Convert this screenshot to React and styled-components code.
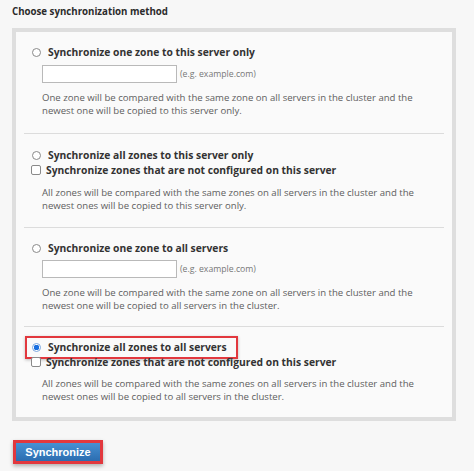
import { createGlobalStyle } from "styled-components";
import styled from "styled-components";

const GlobalStyle = createGlobalStyle`
  html, body {
    margin: 0;
    background: #f7f7f7;
  }
  body {
    font-family: "Open Sans", "DejaVu Sans", sans-serif;
    color: #333;
  }
`;

let Page = styled.div`
  width: 474px;
  height: 471px;
  box-sizing: border-box;
  padding: 4px 18px 0 12px;
`;

let Title = styled.div`
  font-size: 9.7px;
  font-weight: 700;
  line-height: 16px;
  color: #2b2b2b;
  margin-bottom: 8px;
`;

let Panel = styled.div`
  border: 4px solid #dedede;
  background: #fafafa;
  padding: 0 8px;
`;

let Section = styled.div`
  padding: ${(props) => props.$pad};
  border-bottom: 1px solid #dcdcdc;
  &:last-child {
    border-bottom: none;
  }
`;

let Row = styled.div`
  display: flex;
  align-items: center;
  height: 15px;
  padding-left: 8px;
`;

let Highlight = styled.div`
  display: inline-flex;
  align-items: center;
  height: 23px;
  box-sizing: border-box;
  margin-left: -7px;
  padding: 0 9px 0 5px;
  border: 2px solid #e2383e;
  box-shadow: 0 1px 3px rgba(0, 0, 0, 0.25);
`;

let Radio = styled.span`
  width: 9px;
  height: 9px;
  border-radius: 50%;
  box-sizing: border-box;
  border: 1px solid ${(props) => (props.$checked ? "#7aa7e0" : "#8a8a8a")};
  background: ${(props) =>
    props.$checked
      ? "radial-gradient(circle, #1a6fe0 0 2.6px, #ffffff 3px)"
      : "#fff"};
  margin-right: 7px;
  flex: none;
`;

let Check = styled.span`
  width: 10px;
  height: 10px;
  box-sizing: border-box;
  border: 1px solid #8a8a8a;
  border-radius: 2px;
  background: #fff;
  margin: 0 5px 0 -1px;
  flex: none;
`;

let Label = styled.span`
  font-size: 10.3px;
  font-weight: 700;
  color: #333;
  white-space: nowrap;
`;

let FieldRow = styled.div`
  display: flex;
  align-items: center;
  margin: ${(props) => props.$top} 0 0 18px;
`;

let TextBox = styled.input`
  width: 135px;
  height: 18px;
  box-sizing: border-box;
  border: 1px solid #b9b9b9;
  background: #fff;
  margin: 0 3px 0 0;
  padding: 0 4px;
`;

let Hint = styled.span`
  font-size: 8.7px;
  color: #777;
`;

let Desc = styled.p`
  margin: ${(props) => props.$top} 0 0 18px;
  font-size: 9.6px;
  line-height: 13px;
  color: #5e5e5e;
`;

let Footer = styled.div`
  margin-top: 18.5px;
  padding-left: 1px;
`;

let Button = styled.button`
  width: 90px;
  height: 24px;
  box-sizing: border-box;
  border: 3px solid #e2383e;
  background: linear-gradient(#4790d3, #2c6db0);
  color: #fff;
  font-family: "Liberation Sans", Arial, sans-serif;
  font-size: 11px;
  font-weight: 700;
  padding: 0;
  box-shadow: 0 2px 4px rgba(0, 0, 0, 0.3);
`;

let options = [
  {
    label: "Synchronize one zone to this server only",
    field: "5.5px",
    pad: "12.5px 0 16.5px",
    top: "7.5px",
    desc: [
      "One zone will be compared with the same zone on all servers in the cluster and the",
      "newest one will be copied to this server only.",
    ],
  },
  {
    label: "Synchronize all zones to this server only",
    extra: true,
    pad: "13.5px 0 15.5px",
    top: "8px",
    desc: [
      "All zones will be compared with the same zones on all servers in the cluster and the",
      "newest ones will be copied to this server only.",
    ],
  },
  {
    label: "Synchronize one zone to all servers",
    field: "4.5px",
    pad: "12.5px 0 14.5px",
    top: "7.5px",
    desc: [
      "One zone will be compared with the same zone on all servers in the cluster and the",
      "newest one will be copied to all servers in the cluster.",
    ],
  },
  {
    label: "Synchronize all zones to all servers",
    extra: true,
    checked: true,
    pad: "12.5px 0 14px",
    top: "7px",
    desc: [
      "All zones will be compared with the same zones on all servers in the cluster and the",
      "newest ones will be copied to all servers in the cluster.",
    ],
  },
];

function Option(props) {
  let opt = props.opt;
  let choice = (
    <>
      <Radio $checked={opt.checked} />
      <Label>{opt.label}</Label>
    </>
  );
  return (
    <Section $pad={opt.pad}>
      <Row>{opt.checked ? <Highlight>{choice}</Highlight> : choice}</Row>
      {opt.extra && (
        <Row>
          <Check />
          <Label>Synchronize zones that are not configured on this server</Label>
        </Row>
      )}
      {opt.field && (
        <FieldRow $top={opt.field}>
          <TextBox type="text" />
          <Hint>(e.g. example.com)</Hint>
        </FieldRow>
      )}
      <Desc $top={opt.top}>
        {opt.desc[0]}
        <br />
        {opt.desc[1]}
      </Desc>
    </Section>
  );
}

function App() {
  return (
    <>
      <GlobalStyle />
      <Page>
        <Title>Choose synchronization method</Title>
        <Panel>
          {options.map((opt) => (
            <Option key={opt.label} opt={opt} />
          ))}
        </Panel>
        <Footer>
          <Button>Synchronize</Button>
        </Footer>
      </Page>
    </>
  );
}

export default App;
